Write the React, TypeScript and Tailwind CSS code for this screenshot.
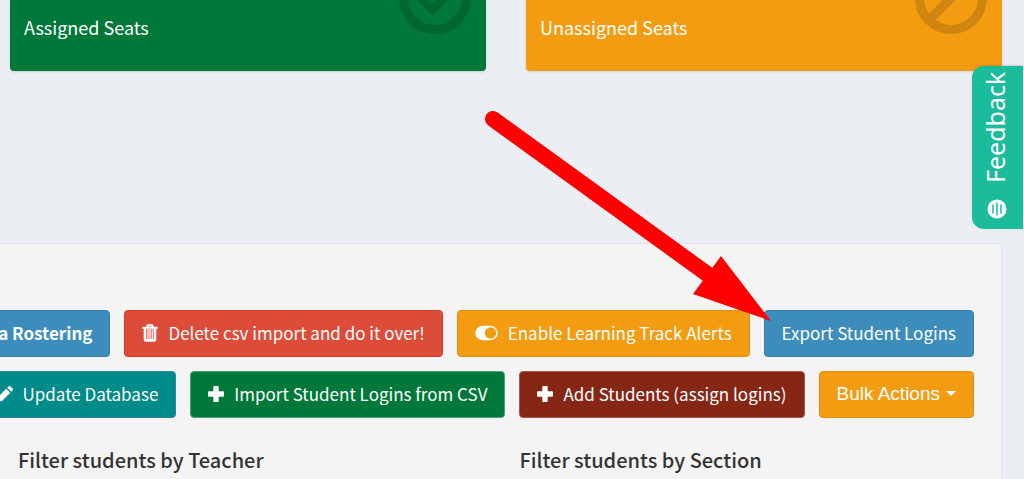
import type { ReactNode } from "react";

function SeatCard({ label, color, children }: { label: string; color: string; children: ReactNode }) {
  return (
    <section className={`relative h-[71px] flex-1 overflow-hidden rounded-b-sm px-3.5 pt-[11px] shadow-sm ${color}`}>
      <h3 className="text-lg leading-8 text-white">{label}</h3>
      <svg className="absolute -top-[38px] right-[15px] size-[72px]" viewBox="0 0 72 72" aria-hidden="true">
        {children}
      </svg>
    </section>
  );
}

function ActionButton({ color, children }: { color: string; children: ReactNode }) {
  return (
    <button
      type="button"
      className={`flex h-[47px] shrink-0 items-center whitespace-nowrap rounded border px-[17px] pb-0.5 leading-6 text-white ${color}`}
    >
      {children}
    </button>
  );
}

function PlusIcon() {
  return (
    <svg className="mr-2.5 h-4 w-4" viewBox="0 0 16 16" fill="currentColor" aria-hidden="true">
      <path d="M6.3 0h3.4a1 1 0 0 1 1 1v4.300H15a1 1 0 0 1 1 1v3.400a1 1 0 0 1-1 1h-4.300V15a1 1 0 0 1-1 1H6.300a1 1 0 0 1-1-1v-4.300H1a1 1 0 0 1-1-1V6.300a1 1 0 0 1 1-1h4.300V1a1 1 0 0 1 1-1z" />
    </svg>
  );
}

function TrashIcon() {
  return (
    <svg className="mr-2.5 h-[18px] w-4" viewBox="0 0 16 18" fill="none" stroke="currentColor" aria-hidden="true">
      <path strokeWidth="2" d="M.3 3.800h15.400M5 3.500 5.800 1.300h4.400L11 3.500" />
      <path strokeWidth="2.600" d="M3 4.200v11.200q0 1 1 1h8q1 0 1-1V4.200" />
      <path strokeWidth="1.300" d="M6 5v11M8 5v11M10.200 5v11" />
    </svg>
  );
}

function ToggleIcon() {
  return (
    <svg className="mr-2.5 h-4 w-[23px]" viewBox="0 0 23 16" fill="currentColor" aria-hidden="true">
      <path fillRule="evenodd" d="M7.500.8h8a7.200 7.200 0 0 1 0 14.400h-8A7.200 7.200 0 0 1 7.500.8zM15.500 2.300a5.700 5.700 0 1 0 0 11.400 5.700 5.700 0 0 0 0-11.400z" />
    </svg>
  );
}

function PencilIcon() {
  return (
    <svg className="mr-2.5 h-4 w-4" viewBox="0 0 16 16" fill="currentColor" aria-hidden="true">
      <path d="M9.200 2.700 13.300 6.800 5 15.100 0 16 .9 11zM10.200 1.700 11.500.4a1.300 1.300 0 0 1 1.900 0l2.200 2.200a1.300 1.300 0 0 1 0 1.900l-1.300 1.300z" />
    </svg>
  );
}

export default function App() {
  return (
    <div className="relative flex min-h-screen flex-col overflow-hidden bg-[#ebeef3] font-['Noto_Sans_CJK_SC',sans-serif]">
      <div className="flex gap-10 pl-2.5 pr-[22px]">
        <SeatCard label="Assigned Seats" color="bg-[#007839]">
          <circle cx="36" cy="36" r="31.5" fill="none" stroke="#00662f" strokeWidth="9" />
          <path fill="#00662f" d="M33.500 53.500 15 35l6-6 12.500 12.500L50 25l6 6z" />
        </SeatCard>
        <SeatCard label="Unassigned Seats" color="bg-[#f39c12]">
          <circle cx="36" cy="36" r="31.5" fill="none" stroke="#cf8510" strokeWidth="9" />
          <path stroke="#cf8510" strokeWidth="9" d="M14 58 58 14" />
        </SeatCard>
      </div>

      <main className="mr-[22px] mt-[172px] flex-1 rounded-tr border-r border-t border-[#e2e4e8] bg-[#f4f4f4] pt-[66px]">
        <div className="flex flex-col gap-3.5 pr-[27px]">
          <div className="flex justify-end gap-3.5">
            <ActionButton color="border-[#367fa9] bg-[#3c8dbc] text-[17px]">
              <strong className="font-bold">a Rostering</strong>
            </ActionButton>
            <ActionButton color="border-[#d73925] bg-[#dd4b39] text-[17px]">
              <TrashIcon />
              Delete csv import and do it over!
            </ActionButton>
            <ActionButton color="border-[#e08e0b] bg-[#f39c12] text-[17px]">
              <ToggleIcon />
              Enable Learning Track Alerts
            </ActionButton>
            <ActionButton color="border-[#367fa9] bg-[#3c8dbc] text-[17px]">Export Student Logins</ActionButton>
          </div>
          <div className="flex justify-end gap-3.5">
            <ActionButton color="border-[#367fa9] bg-[#008b8b] text-[17px]">
              <PencilIcon />
              Update Database
            </ActionButton>
            <ActionButton color="border-[#4c9f73] bg-[#007839] text-[17px]">
              <PlusIcon />
              Import Student Logins from CSV
            </ActionButton>
            <ActionButton color="border-[#a35a4c] bg-[#862716] text-[17px]">
              <PlusIcon />
              Add Students (assign logins)
            </ActionButton>
            <ActionButton color="border-[#e08e0b] bg-[#f39c12] font-['Liberation_Sans',sans-serif] text-[19px]">
              Bulk Actions
              <svg className="ml-1.5 h-[5px] w-2.5" viewBox="0 0 10 5" fill="currentColor" aria-hidden="true">
                <path d="M0 0h10L5 5z" />
              </svg>
            </ActionButton>
          </div>
        </div>
        <div className="grid grid-cols-2 pl-[18px] pt-[26px] text-xl font-medium leading-8 text-[#333]">
          <h4>Filter students by Teacher</h4>
          <h4 className="pl-2.5">Filter students by Section</h4>
        </div>
      </main>

      <button
        type="button"
        className="absolute right-px top-[66px] flex h-[163px] w-[51px] rotate-180 items-center justify-start rounded-r-xl bg-[#1abc9c] pt-2.5 font-['Noto_Sans',sans-serif] text-[25px] leading-none text-white shadow [writing-mode:vertical-rl]"
      >
        <svg className="mb-4 size-5" viewBox="0 0 20 20" aria-hidden="true">
          <circle cx="10" cy="10" r="9.500" fill="#fff" />
          <path stroke="#1abc9c" strokeWidth="1.500" strokeLinecap="round" d="M6 6v8M10 4v12M14 6v8" />
        </svg>
        <span className="pl-1">Feedback</span>
      </button>

      <svg className="pointer-events-none absolute left-[480px] top-[105px] h-[220px] w-[295px]" viewBox="0 0 295 220" aria-hidden="true">
        <path d="M13 14 230 171" stroke="#f00" strokeWidth="16" strokeLinecap="round" />
        <path d="M291 216 241 151 213 189z" fill="#f00" />
      </svg>
    </div>
  );
}
